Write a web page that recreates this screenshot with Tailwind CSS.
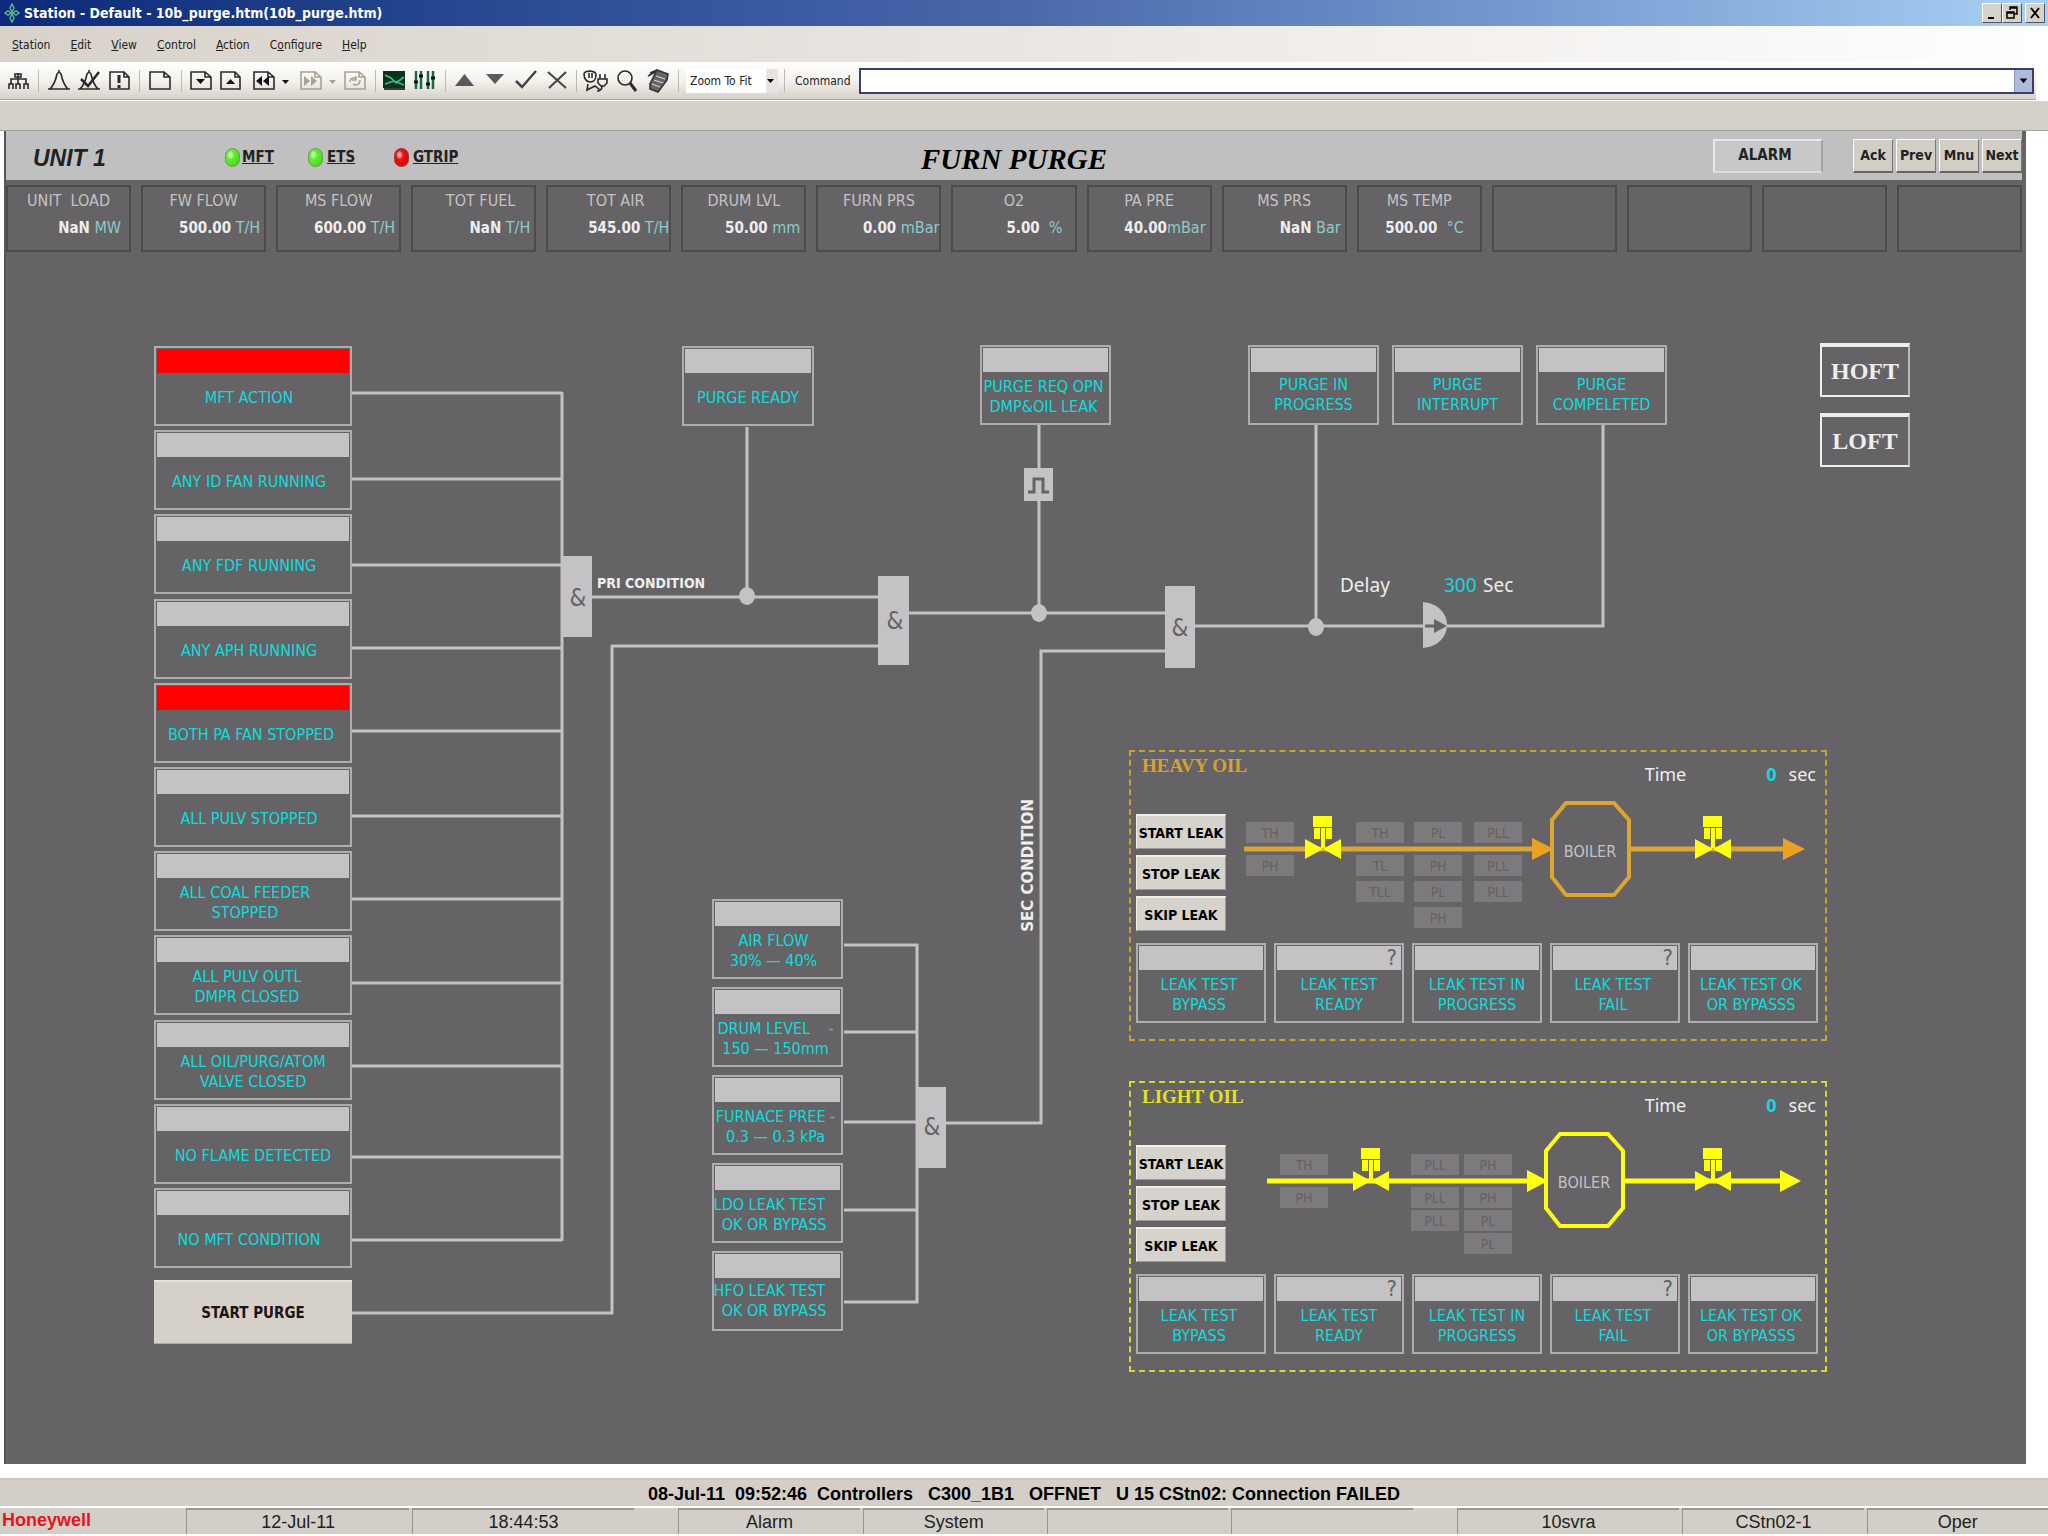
<!DOCTYPE html>
<html lang="en">
<head>
    <meta charset="UTF-8" />
    <meta name="viewport" content="width=device-width, initial-scale=1" />
    <title>Station - Default - 10b_purge.htm(10b_purge.htm)</title>
    <script src="https://cdn.jsdelivr.net/npm/@tailwindcss/browser@4"></script>
</head>

<body class="flex flex-col min-h-screen bg-white text-black font-['DejaVu_Sans_Condensed','Noto_Sans',sans-serif]">

    <!-- Title bar -->
    <header class="flex items-center h-[26px] pl-1 pr-[3px] bg-linear-to-r from-[#0c2a78] via-[#4a69ac] to-[#a9d0f5]">
        <svg class="w-4 h-5" viewBox="0 0 16 20" fill="#0c2a78" stroke="#5fae8c" stroke-width="1.5">
            <path d="M8 1l2 4-2 4-2-4zM8 11l2 4-2 4-2-4zM1 10l3-2 3 2-3 2zM9 10l3-2 3 2-3 2z" />
        </svg>
        <h1 class="ml-1 text-[14px] font-bold text-white">Station - Default - 10b_purge.htm(10b_purge.htm)</h1>
        <div class="ml-auto flex">
            <button aria-label="Minimize" class="w-5 h-5 bg-[#d6d2ca] border border-t-white border-l-white border-r-[#555] border-b-[#555]">
                <svg viewBox="0 0 18 18"><path d="M5 13h6v2H5z" /></svg>
            </button>
            <button aria-label="Restore" class="w-5 h-5 bg-[#d6d2ca] border border-t-white border-l-white border-r-[#555] border-b-[#555]">
                <svg viewBox="0 0 18 18" fill="none" stroke="#000" stroke-width="1.5"><path d="M7 6V3h7v7h-3M7 4h7M4 8h7v6H4zM4 9h7" /></svg>
            </button>
            <button aria-label="Close" class="w-5 h-5 ml-[3px] bg-[#d6d2ca] border border-t-white border-l-white border-r-[#555] border-b-[#555]">
                <svg viewBox="0 0 18 18" fill="none" stroke="#000" stroke-width="2"><path d="M5 4l8 10M13 4L5 14" /></svg>
            </button>
        </div>
    </header>

    <!-- Menu -->
    <nav class="flex items-center gap-5 h-9 pl-3 pt-[2px] text-[12px] text-[#222] bg-linear-to-r from-[#d8d2ca] via-[#ebe6e2] to-white">
        <a href="#"><u>S</u>tation</a>
        <a href="#"><u>E</u>dit</a>
        <a href="#"><u>V</u>iew</a>
        <a href="#"><u>C</u>ontrol</a>
        <a href="#"><u>A</u>ction</a>
        <a href="#">C<u>o</u>nfigure</a>
        <a href="#"><u>H</u>elp</a>
    </nav>

    <!-- Toolbar -->
    <div class="flex items-center h-[38px] mr-3 pr-[2px] border-b border-[#a8a49c] bg-linear-to-b from-white via-[#f4f2ee] to-[#d8d0c8]">
        <svg class="shrink-0 w-[680px] h-[37px]" viewBox="0 62 680 37" fill="none" stroke="#2a2a2a" stroke-width="1.6">
            <!-- separators -->
            <path stroke="#bdb8b0" stroke-width="1" d="M38.500 70v22M139.500 70v22M181.500 70v22M375.500 70v22M445.500 70v22M576.500 70v22M678.500 70v22" />
            <!-- tree -->
            <path d="M18 73v6M11 84v-5h15v5M18 79v5M15 74h6v3h-6zM9 89v-5h4v5M16 89v-5h4v5M24 89v-5h4v5" />
            <!-- bells -->
            <path d="M59 70v3M57 74c-1 5-3 11-7 15h18c-4-4-6-10-7-15-1-2-3-2-4 0zM89 70v3M87 74c-1 5-3 11-7 15h18c-4-4-6-10-7-15-1-2-3-2-4 0zM48 89h22M78 89h22" />
            <path stroke-width="2.500" d="M81 79l7 7 11-14" />
            <!-- pages -->
            <path d="M110 72h14l5 5v12h-19zM124 72v5h5M150 72h14l6 5v12h-20zM164 72v5h6M191 72h14l6 5v12h-20zM205 72v5h6M221 72h14l5 5v12h-19zM235 72v5h5M254 72h14l6 5v12h-20zM268 72v5h6" />
            <path stroke-width="3" d="M119 75v8M119 85v3" />
            <path fill="#111" stroke="none" d="M196 79h9l-4.500 5zM226 84h9l-4.500-5zM262 76v10l-6-5zM269 76v10l-6-5zM282 80h7l-3.500 4z" />
            <g stroke="#a9a196">
                <path d="M301 72h14l6 5v12h-20zM315 72v5h6M345 72h14l6 5v12h-20zM359 72v5h6M350 82c0-4 4-5 6-3M360 80c0 5-4 6-7 4M356 76v4h-4" />
                <path fill="#a9a196" stroke="none" d="M304 76v10l6-5zM311 76v10l6-5zM329 80h7l-3.500 4z" />
            </g>
            <!-- trend -->
            <path fill="#08331f" stroke="none" d="M383 71h22v17h-22z" />
            <path stroke="#3fbf7f" d="M385 75l6 3 5 5 8-6M385 84l9-3 10 4" />
            <path stroke="#111" d="M384 89h21" />
            <!-- group bars -->
            <path stroke="#15684a" stroke-width="2.500" d="M416 71v18M421 71v18M428 71v18M433 71v18" />
            <path stroke="#111" stroke-width="3" d="M414 82h4M419 76h4M426 84h4M431 78h4" />
            <!-- arrows, accept, cancel -->
            <path fill="#5a5a5a" stroke="none" d="M455 86h19l-9.500-12zM486 74h18l-9 10z" />
            <path stroke="#444" stroke-width="2.500" d="M516 81l6 6 14-16" />
            <path stroke="#444" stroke-width="2" d="M548 72l18 16M566 72l-17 16" />
            <!-- plug -->
            <path d="M584 74c0-4 12-4 12 1s-3 7-6 7-6-3-6-8zM589 73v5M592 73v5M588 84l-1 6 8-4 5 4M598 79h9v4l-3 3h-3l-3-3zM600 74v5M605 74v5M602 86c0 4-2 5-5 5" />
            <!-- magnifier -->
            <circle cx="625" cy="78" r="7" />
            <path stroke-width="3" d="M630 83l6 8" />
            <!-- book -->
            <path fill="#666" stroke="#333" d="M657 70l11 4-1 6-9 12-8-3v-5z" />
            <path stroke="#333" d="M648 76l9-5M650 73l7-3" />
            <path stroke="#ddd" stroke-width="1" d="M656 76l9 3M654 80l9 3M652 84l8 3" />
        </svg>
        <select aria-label="Zoom" class="shrink-0 ml-[6px] w-20 h-6 pl-1 appearance-none bg-white text-[12px] text-[#222]">
            <option>Zoom To Fit</option>
        </select>
        <svg class="shrink-0 w-3 h-6 bg-[#e8e5e0]" viewBox="0 0 12 24"><path d="M1 10h7l-3.500 4z" /></svg>
        <span class="ml-[6px] h-6 border-l border-[#bdb8b0]"></span>
        <label for="command" class="shrink-0 ml-[10px] text-[12px] text-[#222]">Command</label>
        <div class="flex flex-1 h-[26px] ml-2 border-2 border-[#34406f] bg-white">
            <input id="command" type="text" class="flex-1 min-w-0 px-1 text-[14px] outline-none" />
            <button aria-label="Command history" class="w-[18px] bg-[#aebbdc] border-l border-[#8a97c0]">
                <svg viewBox="0 0 18 22"><path d="M5 9h8l-4 5z" /></svg>
            </button>
        </div>
    </div>
    <div class="h-[30px] mt-px bg-[#d6d0ca] border-b border-[#a09e96]"></div>

    <!-- Graphic page -->
    <main class="flex flex-col flex-1 ml-1 mr-[22px] bg-[#656366] border-l-2 border-[#555]">
        <div class="grid grid-cols-[1fr_auto_1fr] items-center h-[49px] bg-[#c0c0c0] mr-1">
            <div class="flex items-center pl-[27px] pt-1">
                <span class="w-48 font-['Liberation_Sans',sans-serif] text-[23px] leading-7 font-bold italic text-[#222]">UNIT 1</span>
                <a href="#" class="flex items-center gap-[2px] w-[83px] text-[15px] font-bold text-[#222] underline">
                    <i class="w-[15px] h-[19px] rounded-full border border-[#6a9a5a] bg-radial-[at_35%_35%] from-white via-[#5cf02c] via-30% to-[#3cd010]"></i>MFT</a>
                <a href="#" class="flex items-center gap-[4px] w-[86px] text-[15px] font-bold text-[#222] underline">
                    <i class="w-[15px] h-[19px] rounded-full border border-[#6a9a5a] bg-radial-[at_35%_35%] from-white via-[#5cf02c] via-30% to-[#3cd010]"></i>ETS</a>
                <a href="#" class="flex items-center gap-[4px] text-[15px] font-bold text-[#222] underline">
                    <i class="w-[15px] h-[19px] rounded-full border border-[#a03030] bg-radial-[at_35%_35%] from-white via-[#f01010] via-30% to-[#d00000]"></i>GTRIP</a>
            </div>
            <h2 class="pt-[6px] font-['Liberation_Serif',serif] text-[29px] leading-8 font-bold italic">FURN PURGE</h2>
            <div class="flex items-center justify-end text-[14px] font-bold text-[#222]">
                <button class="w-[110px] h-[34px] mr-[30px] pr-[6px] border-2 border-[#e8e8e8] border-r-[#a0a0a0] border-b-[#dcdcdc] bg-[#c8c8c8] text-[15px]">ALARM</button>
                <div class="flex gap-[3px]">
                    <button class="w-10 h-[34px] bg-[#d2cec6] border border-t-white border-l-white border-b-2 border-r-[#777] border-b-[#666]">Ack</button>
                    <button class="w-10 h-[34px] bg-[#d2cec6] border border-t-white border-l-white border-b-2 border-r-[#777] border-b-[#666]">Prev</button>
                    <button class="w-10 h-[34px] bg-[#d2cec6] border border-t-white border-l-white border-b-2 border-r-[#777] border-b-[#666]">Mnu</button>
                    <button class="w-10 h-[34px] bg-[#d2cec6] border border-t-white border-l-white border-b-2 border-r-[#777] border-b-[#666]">Next</button>
                </div>
            </div>
        </div>

        <div id="tiles" class="grid grid-cols-[repeat(15,minmax(0,1fr))] gap-[10px] h-[72px] pt-[5px] pr-1"></div>

        <!-- Logic diagram -->
        <section class="relative flex-1 min-h-[1210px] text-[16px] leading-5">
            <svg class="absolute left-0 top-0 w-[1800px] h-[1210px]" viewBox="6 252 1800 1210" fill="none" stroke="#c4c2c4" stroke-width="3">
                <path d="M352 393H562M352 479H562M352 565H562M352 648H562M352 731H562M352 816H562M352 899H562M352 983H562M352 1066H562M352 1157H562M352 1240H562M562 392V1241" />
                <path d="M592 597H880M747 427V597M352 1313H612V646H880" />
                <path d="M908 613H1166M1039 425V613M946 1123H1041V651H1166" />
                <path d="M1195 626H1603V425M1316 425V626" />
                <path d="M844 945H917V1302H844M844 1032H917M844 1122H917M844 1210H917" />
                <g fill="#c4c2c4" stroke="none">
                    <ellipse cx="747" cy="596" rx="8" ry="9" />
                    <ellipse cx="1039" cy="613" rx="8" ry="9" />
                    <ellipse cx="1316" cy="627" rx="8" ry="9" />
                    <path d="M562 556h30v81h-30zM878 576h31v89h-31zM1165 586h30v82h-30zM917 1087h29v81h-29zM1024 468h29v33h-29zM1423 602c32 3 32 43 0 46z" />
                </g>
                <path stroke="#656366" d="M1028 492h6v-13h9v13h6M1425 626h12" />
                <path fill="#656366" stroke="none" d="M1434 619l13 7-13 7z" />
                <g fill="#656366" stroke="none" text-anchor="middle" class="text-[24px]">
                    <text x="578" y="606">&amp;</text>
                    <text x="895" y="629">&amp;</text>
                    <text x="1180" y="636">&amp;</text>
                    <text x="932" y="1135">&amp;</text>
                </g>
            </svg>

            <div class="absolute left-[148px] top-[94px] w-[198px] flex flex-col">
                <div id="primary" class="flex flex-col justify-between h-[922px]"></div>
                <button class="mt-3 h-16 bg-[#d6d0ca] border-t-2 border-t-[#e8e4e0] border-b border-b-[#aaa] font-bold text-[15px] text-[#1c1414]">START PURGE</button>
            </div>
            <div id="ready" class="absolute left-[676px] top-[94px] w-[132px]"></div>
            <div id="request" class="absolute left-[974px] top-[93px] w-[131px]"></div>
            <div id="progress" class="absolute left-[1242px] top-[93px] grid grid-cols-3 gap-[13px] w-[419px]"></div>
            <div id="secondary" class="absolute left-[706px] top-[647px] w-[131px] flex flex-col gap-2"></div>

            <div class="absolute left-[1814px] top-[91px] w-[90px] flex flex-col gap-4 font-['Liberation_Serif',serif] text-[24px] font-bold text-[#eee]">
                <button class="h-[54px] border-2 border-t-4 border-[#eee] border-r-[#bbb]">HOFT</button>
                <button class="h-[54px] border-2 border-t-4 border-[#eee] border-r-[#bbb]">LOFT</button>
            </div>

            <span class="absolute left-[591px] top-[321px] text-[14px] font-bold text-[#eee]">PRI CONDITION</span>
            <span class="absolute left-[1012px] top-[547px] [writing-mode:vertical-rl] rotate-180 font-['DejaVu_Sans',sans-serif] text-[15px] font-bold text-[#eee]">SEC CONDITION</span>
            <p class="absolute left-[1334px] top-[323px] flex font-['Comic_Sans_MS','Noto_Sans',sans-serif] text-[19px] text-[#eee]">
                <span class="w-[104px]">Delay</span><span class="w-[39px] text-[#14d8e0]">300</span><span>Sec</span>
            </p>

            <!-- Oil leak tests -->
            <div class="absolute left-[1123px] top-[498px] w-[698px] flex flex-col gap-10">
                <section class="pl-[5px] pr-[7px] pb-4 border-2 border-dashed border-[#c8a42c]">
                    <div class="flex justify-between h-11 pl-[6px]">
                        <h3 class="pt-1 font-['Liberation_Serif',serif] text-[19px] font-bold text-[#d8a02c]">HEAVY OIL</h3>
                        <p class="flex pt-3 pr-[2px] font-['Comic_Sans_MS','Noto_Sans',sans-serif] text-[18px] text-[#eee]">
                            <span>Time</span><span class="ml-20 mr-3 font-bold text-[#14d8e0]">0</span><span>sec</span>
                        </p>
                    </div>
                    <div class="flex h-[136px]">
                        <div class="flex flex-col gap-[6px] w-[90px] pt-[18px] mr-[11px] text-[14px] font-bold" data-buttons></div>
                        <svg class="flex-1 h-[136px]" viewBox="1237 796 581 136">
                            <g data-sensors="heavy"></g>
                            <path stroke="#dca430" stroke-width="5" d="M1244 849H1535M1631 849H1784" />
                            <path fill="#eca024" d="M1532 838l22 11-22 11zM1783 838l22 11-22 11z" />
                            <path fill="none" stroke="#dca430" stroke-width="4" d="M1566 803h48l15 17v57l-15 18h-48l-14-18v-57z" />
                            <g fill="#ffff10">
                                <path d="M1305 839l18 10 18-10v20l-18-10-18 10zM1313 816h19v11h-19zM1314 828h18v11h-18zM1321 838h4v10h-4z" />
                                <path d="M1695 839l18 10 18-10v20l-18-10-18 10zM1703 816h19v11h-19zM1704 828h18v11h-18zM1711 838h4v10h-4z" />
                            </g>
                            <path stroke="#777718" d="M1320.500 828v11M1325.500 828v11M1710.500 828v11M1715.500 828v11" />
                            <text x="1590" y="857" text-anchor="middle" fill="#c4c2c4" class="text-[16px]">BOILER</text>
                        </svg>
                    </div>
                    <div class="grid grid-cols-5 gap-2 mt-[11px]" data-leak></div>
                </section>

                <section class="pl-[5px] pr-[7px] pb-4 border-2 border-dashed border-[#d8d830]">
                    <div class="flex justify-between h-11 pl-[6px]">
                        <h3 class="pt-1 font-['Liberation_Serif',serif] text-[19px] font-bold text-[#e4e024]">LIGHT OIL</h3>
                        <p class="flex pt-3 pr-[2px] font-['Comic_Sans_MS','Noto_Sans',sans-serif] text-[18px] text-[#eee]">
                            <span>Time</span><span class="ml-20 mr-3 font-bold text-[#14d8e0]">0</span><span>sec</span>
                        </p>
                    </div>
                    <div class="flex h-[136px]">
                        <div class="flex flex-col gap-[6px] w-[90px] pt-[18px] mr-[11px] text-[14px] font-bold" data-buttons></div>
                        <svg class="flex-1 h-[136px]" viewBox="1237 1127 581 136">
                            <g data-sensors="light"></g>
                            <path stroke="#ffff10" stroke-width="5" d="M1267 1181H1530M1624 1181H1782" />
                            <path fill="#ffff10" d="M1527 1170l21 11-21 11zM1780 1170l21 11-21 11z" />
                            <path fill="none" stroke="#ffff10" stroke-width="4" d="M1560 1134h48l15 17v57l-15 18h-48l-14-18v-57z" />
                            <g fill="#ffff10">
                                <path d="M1353 1171l18 10 18-10v20l-18-10-18 10zM1361 1148h19v11h-19zM1362 1160h18v11h-18zM1369 1170h4v10h-4z" />
                                <path d="M1695 1171l18 10 18-10v20l-18-10-18 10zM1703 1148h19v11h-19zM1704 1160h18v11h-18zM1711 1170h4v10h-4z" />
                            </g>
                            <path stroke="#777718" d="M1368.500 1160v11M1373.500 1160v11M1710.500 1160v11M1715.500 1160v11" />
                            <text x="1584" y="1188" text-anchor="middle" fill="#c4c2c4" class="text-[16px]">BOILER</text>
                        </svg>
                    </div>
                    <div class="grid grid-cols-5 gap-2 mt-[11px]" data-leak></div>
                </section>
            </div>
        </section>
    </main>

    <!-- Message line and status bar -->
    <footer class="mt-[14px] mb-[2px] font-['Liberation_Sans',sans-serif] text-[#222]">
        <p class="h-[30px] pt-[2px] border-t-2 border-b-2 border-t-[#c8c8c8] border-b-white bg-[#d3cfc8] text-center text-[18px] leading-6 font-bold whitespace-pre text-black">08-Jul-11  09:52:46  Controllers   C300_1B1   OFFNET   U 15 CStn02: Connection FAILED</p>
        <div class="grid grid-cols-[183fr_222fr_222fr_38fr_181fr_181fr_181fr_181fr_38fr_222fr_181fr_181fr] gap-x-[3px] h-[26px] bg-[#d3cfc8] text-center text-[18px] leading-6">
            <span class="pl-[2px] text-left font-bold text-[#e8141c]">Honeywell</span>
            <span class="border-t-2 border-l border-[#98948e]">12-Jul-11</span>
            <span class="border-t-2 border-l border-[#98948e]">18:44:53</span>
            <span></span>
            <span class="border-t-2 border-l border-[#98948e]">Alarm</span>
            <span class="border-t-2 border-l border-[#98948e]">System</span>
            <span class="border-t-2 border-l border-[#98948e]"></span>
            <span class="border-t-2 border-l border-[#98948e]"></span>
            <span></span>
            <span class="border-t-2 border-l border-[#98948e]">10svra</span>
            <span class="border-t-2 border-l border-[#98948e]">CStn02-1</span>
            <span class="border-t-2 border-l border-[#98948e]">Oper</span>
        </div>
    </footer>

    <script>
        // [name, value, unit, right padding]
        const tiles = [
            ['UNIT  LOAD', 'NaN', ' MW', 'pr-2'], ['FW FLOW', '500.00', ' T/H', 'pr-1'], ['MS FLOW', '600.00', ' T/H', 'pr-1'],
            ['   TOT FUEL', 'NaN', ' T/H', 'pr-1'], ['   TOT AIR', '545.00', ' T/H', 'pr-0'], ['DRUM LVL', '50.00', ' mm', 'pr-1'],
            ['FURN PRS', '0.00', ' mBar', 'pr-0'], ['O2', '5.00', '  %', 'pr-3'], ['PA PRE', '40.00', 'mBar', 'pr-1'],
            ['MS PRS', 'NaN', ' Bar', 'pr-1'], ['MS TEMP', '500.00', '  °C', 'pr-4'],
            ['', '', '', ''], ['', '', '', ''], ['', '', '', ''], ['', '', '', '']
        ];
        document.getElementById('tiles').innerHTML = tiles.map(t => `
            <div class="border-2 border-[#4c4a4c] whitespace-pre leading-[27px] text-[16px]"><p class="text-center text-[#c4c2c4]">${t[0]}</p><p class="text-right ${t[3]}"><b class="text-[15px] text-[#eee]">${t[1]}</b><span class="text-[#8ccccc]">${t[2]}</span></p></div>`).join('');

        function card(text, pad, alarm, mark) {
            return `
            <div class="flex flex-col h-20 p-px border-2 border-[#aeacae]">
                <div class="h-6 pr-1 text-right text-[22px] leading-6 text-[#656366] ${alarm ? 'bg-[#ff0000]' : 'bg-[#c4c2c4]'}">${mark || ''}</div>
                <p class="flex flex-1 items-center justify-center text-center whitespace-pre text-[#10dcdc] ${pad}">${text}</p>
            </div>`;
        }

        document.getElementById('primary').innerHTML = [
            card('MFT ACTION', 'pr-2', true), card('ANY ID FAN RUNNING', 'pr-2'), card('ANY FDF RUNNING', 'pr-2'), card('ANY APH RUNNING', 'pr-2'),
            card('BOTH PA FAN STOPPED', 'pr-1', true), card('ALL PULV STOPPED', 'pr-2'), card('ALL COAL FEEDER\nSTOPPED', 'pr-4'),
            card('ALL PULV OUTL\nDMPR CLOSED', 'pr-3'), card('ALL OIL/PURG/ATOM\nVALVE CLOSED', ''), card('NO FLAME DETECTED', ''),
            card('NO MFT CONDITION', 'pr-2')
        ].join('');
        document.getElementById('ready').innerHTML = card('PURGE READY', 'pb-px');
        document.getElementById('request').innerHTML = card('PURGE REQ OPN\nDMP&amp;OIL LEAK', 'pr-1');
        document.getElementById('progress').innerHTML = card('PURGE IN\nPROGRESS', 'pb-1') + card('PURGE\nINTERRUPT', 'pb-1') + card('PURGE\nCOMPELETED', 'pb-1');
        document.getElementById('secondary').innerHTML = [
            card('AIR FLOW\n30% — 40%', 'pr-2'), card('DRUM LEVEL    -\n150 — 150mm', 'pr-1'), card('FURNACE PREE -\n0.3 — 0.3 kPa', 'pr-1'),
            card('LDO LEAK TEST\n  OK OR BYPASS', 'pr-4'), card('HFO LEAK TEST\n  OK OR BYPASS', 'pr-4 pb-1')
        ].join('');

        document.querySelectorAll('[data-leak]').forEach(el => {
            el.innerHTML = card('LEAK TEST\nBYPASS', 'pr-1 pb-px') + card('LEAK TEST\nREADY', 'pb-px', false, '?') + card('LEAK TEST IN\nPROGRESS', 'pb-px')
                + card('LEAK TEST\nFAIL', 'pr-1 pb-px', false, '?') + card('LEAK TEST OK\nOR BYPASSS', 'pr-1 pb-px');
        });
        document.querySelectorAll('[data-buttons]').forEach(el => {
            el.innerHTML = ['START LEAK', 'STOP LEAK', 'SKIP LEAK'].map(t =>
                `<button class="h-[35px] pt-[2px] bg-[#d6d2cc] border border-t-2 border-t-[#f0eeea] border-l-[#f0eeea] border-r-[#999] border-b-[#999] whitespace-nowrap">${t}</button>`).join('');
        });

        // Inactive transmitter tags: [x, y, tag]
        const sensors = {
            heavy: [
                [1246, 822, 'TH'], [1246, 855, 'PH'], [1356, 822, 'TH'], [1356, 855, 'TL'], [1356, 881, 'TLL'],
                [1414, 822, 'PL'], [1414, 855, 'PH'], [1414, 881, 'PL'], [1414, 907, 'PH'],
                [1474, 822, 'PLL'], [1474, 855, 'PLL'], [1474, 881, 'PLL']
            ],
            light: [
                [1280, 1154, 'TH'], [1280, 1187, 'PH'], [1411, 1154, 'PLL'], [1411, 1187, 'PLL'], [1411, 1210, 'PLL'],
                [1464, 1154, 'PH'], [1464, 1187, 'PH'], [1464, 1210, 'PL'], [1464, 1233, 'PL']
            ]
        };
        document.querySelectorAll('[data-sensors]').forEach(g => {
            g.innerHTML = sensors[g.dataset.sensors].map(([x, y, tag]) =>
                `<rect x="${x}" y="${y}" width="48" height="21" fill="#7c7a7c" /><text x="${x + 24}" y="${y + 16}" text-anchor="middle" fill="#646264" class="text-[14px]">${tag}</text>`).join('');
        });
    </script>
</body>
</html>
